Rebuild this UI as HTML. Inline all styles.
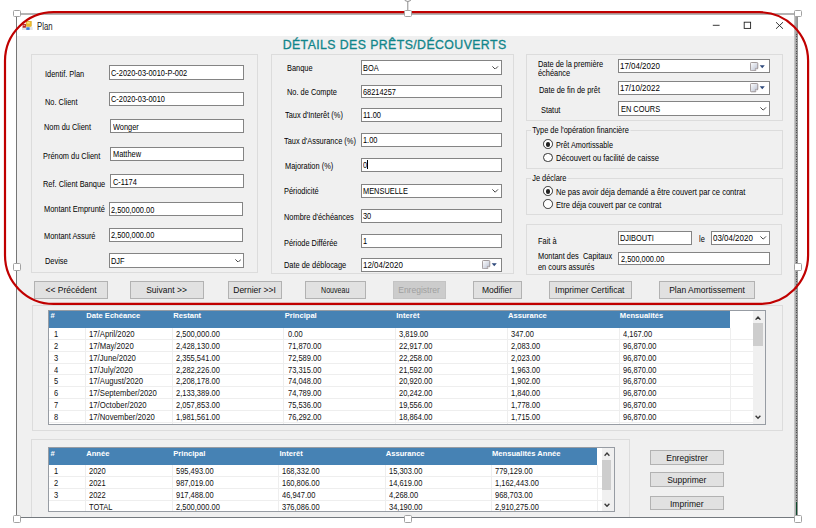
<!DOCTYPE html>
<html><head><meta charset="utf-8"><title>Plan</title>
<style>
html,body{margin:0;padding:0;background:#fff;}
body{width:816px;height:528px;position:relative;overflow:hidden;font-family:"Liberation Sans",sans-serif;color:#000;}
.a{position:absolute;box-sizing:border-box;}
.win{left:16.2px;top:13px;width:781.3px;height:505.2px;background:#f0f0f0;border-left:1px solid #767676;border-top:2px solid #b4b4b4;}
.tbar{left:17.2px;top:15px;width:777.3px;height:21.2px;background:#fff;}
.l{position:absolute;font-size:9.1px;line-height:10px;white-space:pre;transform-origin:0 50%;transform:scaleX(.815);color:#000;}
.tb{position:absolute;box-sizing:border-box;background:#fff;border:1px solid #848484;}
.tb span{position:absolute;left:1.4px;top:50%;margin-top:-4.7px;font-size:9.1px;line-height:10px;white-space:pre;transform-origin:0 50%;transform:scaleX(.815);color:#000;}
.gb{position:absolute;box-sizing:border-box;border:1px solid #dcdcdc;}
.btn{position:absolute;box-sizing:border-box;background:#e1e1e1;border:1px solid #b2b2b2;font-size:8.5px;line-height:16.9px;text-align:center;overflow:hidden;white-space:pre;color:#111;}
.bt{display:inline-block;font-size:9px;transform:scaleX(.945);}
.btn.dis{background:#cccccc;border-color:#c4c4c4;color:#a0a0a0;}
.h{position:absolute;box-sizing:border-box;width:7.4px;height:7.4px;background:#fff;border:1px solid #a2a2a2;border-radius:1.5px;}
.lv{position:absolute;box-sizing:border-box;background:#fff;border:1px solid #979ca3;overflow:hidden;}
.hd{position:absolute;left:0;top:0;background:#4682b4;}
.ht{position:absolute;font-size:7.6px;font-weight:bold;line-height:10px;color:#fff;white-space:pre;}
.c{position:absolute;font-size:9.1px;line-height:10px;white-space:pre;transform-origin:0 50%;transform:scaleX(.825);color:#111;}
.c.d{transform:scaleX(.85)}
.vl{position:absolute;width:1px;background:#eeeeee;}
.hl{position:absolute;height:1px;background:#eeeeee;}
.sb{position:absolute;background:#f0f0f0;}
.th{position:absolute;background:#cdcdcd;}
span.d,.tb span.d{transform:scaleX(.875);left:.7px}
.rad{position:absolute;box-sizing:border-box;width:9.6px;height:9.6px;border-radius:50%;border:.9px solid #333;background:#fff;}
.rad.on:after{content:"";position:absolute;left:1.6px;top:1.6px;width:4.6px;height:4.6px;border-radius:50%;background:#222;}
</style></head><body>

<div class="a win"></div><div class="a tbar"></div>
<div class="a" style="left:794.4px;top:13.5px;width:3.2px;height:504.5px;background:linear-gradient(90deg,#d2d2d2,#a4a4a4 45%,#8e8e8e);"></div>
<div class="a" style="left:795.9px;top:34px;width:1.3px;height:468px;background:repeating-linear-gradient(180deg,#3a3a3a 0,#3a3a3a 1px,rgba(0,0,0,0) 1px,rgba(0,0,0,0) 2.4px);opacity:.75"></div>
<div class="a" style="left:796.2px;top:502px;width:1.2px;height:14px;background:#0d4a2c;"></div>
<svg class="a" style="left:22.4px;top:20.6px" width="10.4" height="9.6" viewBox="0 0 10.4 9.6"><rect x=".2" y="6.4" width="10" height="2.9" fill="#e4e4e4" stroke="#d2d2d2" stroke-width=".3"/><rect x=".6" y="2.9" width="3.3" height="3.8" fill="#b82525"/><rect x="1.6" y="3.9" width="1.1" height="1.1" fill="#f4d0d0"/><rect x="4.3" y=".2" width="5.1" height="5.3" fill="#eebb28" stroke="#c89414" stroke-width=".4"/><rect x="5.2" y="1" width="2.6" height="1.6" fill="#fae489"/><rect x="4.3" y="6.3" width="3.3" height="2.6" fill="#3c7bdc"/></svg>
<div class="a" style="left:36.6px;top:21px;font-size:10.3px;line-height:11px;color:#222;transform-origin:0 50%;transform:scaleX(.755);">Plan</div>
<svg class="a" style="left:706px;top:18px" width="84" height="14" viewBox="0 0 84 14"><g stroke="#222" stroke-width=".9" fill="none"><path d="M6.8 7.3h6.8"/><rect x="38.2" y="4.2" width="6.4" height="6.2"/><path d="M70 4.2l7 6.6M77 4.2l-7 6.6"/></g></svg>
<div class="a" id="ttl" style="left:282.7px;top:37.6px;font-size:12.3px;line-height:14px;color:#10858a;white-space:pre;letter-spacing:.42px;-webkit-text-stroke:.3px #10858a;">DÉTAILS DES PRÊTS/DÉCOUVERTS</div>
<div class="gb" style="left:31px;top:54.3px;width:226.50px;height:219.20px;"></div>
<div class="l" style="left:44.5px;top:69.25px;">Identif. Plan</div>
<div class="tb" style="left:109px;top:65.4px;width:135.10px;height:14.30px;"><span>C-2020-03-0010-P-002</span></div>
<div class="l" style="left:44.5px;top:96.50px;">No. Client</div>
<div class="tb" style="left:109px;top:91.9px;width:135.10px;height:14.30px;"><span>C-2020-03-0010</span></div>
<div class="l" style="left:43.75px;top:122.00px;">Nom du Client</div>
<div class="tb" style="left:110.3px;top:119.2px;width:133.80px;height:14.30px;"><span>Wonger</span></div>
<div class="l" style="left:43.2px;top:150.50px;">Prénom du Client</div>
<div class="tb" style="left:110.3px;top:146.70000000000002px;width:133.80px;height:14.30px;"><span>Matthew</span></div>
<div class="l" style="left:42.9px;top:178.50px;">Ref. Client Banque</div>
<div class="tb" style="left:110.3px;top:174.20000000000002px;width:133.80px;height:14.30px;"><span>C-1174</span></div>
<div class="l" style="left:43.75px;top:204.25px;">Montant Emprunté</div>
<div class="tb" style="left:109px;top:202.20000000000002px;width:134.30px;height:14.30px;"><span>2,500,000.00</span></div>
<div class="l" style="left:43.75px;top:231.25px;">Montant Assuré</div>
<div class="tb" style="left:109px;top:227.9px;width:134.30px;height:14.30px;"><span>2,500,000.00</span></div>
<div class="l" style="left:45px;top:255.50px;">Devise</div>
<div class="tb" style="left:109px;top:253px;width:135.10px;height:14.50px;"><span>DJF</span><svg style="position:absolute;right:2px;top:50%;margin-top:-1.6px" width="6.4" height="3.8" viewBox="0 0 6.4 3.8"><path d="M.4 .4l2.8 2.8 2.8-2.8" stroke="#444" stroke-width="1" fill="none"/></svg></div>
<div class="gb" style="left:271px;top:54.3px;width:242.50px;height:220.00px;"></div>
<div class="l" style="left:286.5px;top:63.00px;">Banque</div>
<div class="tb" style="left:361px;top:60px;width:140.75px;height:14.50px;"><span>BOA</span><svg style="position:absolute;right:2px;top:50%;margin-top:-1.6px" width="6.4" height="3.8" viewBox="0 0 6.4 3.8"><path d="M.4 .4l2.8 2.8 2.8-2.8" stroke="#444" stroke-width="1" fill="none"/></svg></div>
<div class="l" style="left:287.25px;top:87.00px;">No. de Compte</div>
<div class="tb" style="left:361px;top:84.5px;width:140.75px;height:13.75px;"><span>68214257</span></div>
<div class="l" style="left:285.25px;top:109.90px;">Taux d'Interêt (%)</div>
<div class="tb" style="left:361px;top:108.25px;width:140.75px;height:13.50px;"><span>11.00</span></div>
<div class="l" style="left:284px;top:136.25px;">Taux d'Assurance (%)</div>
<div class="tb" style="left:361px;top:133.25px;width:140.75px;height:13.50px;"><span>1.00</span></div>
<div class="l" style="left:284.5px;top:161.00px;">Majoration (%)</div>
<div class="tb" style="left:361px;top:158px;width:140.75px;height:13.75px;"><span>0</span></div>
<div class="l" style="left:284px;top:186.00px;">Périodicité</div>
<div class="tb" style="left:361px;top:183.75px;width:140.75px;height:14.25px;"><span>MENSUELLE</span><svg style="position:absolute;right:2px;top:50%;margin-top:-1.6px" width="6.4" height="3.8" viewBox="0 0 6.4 3.8"><path d="M.4 .4l2.8 2.8 2.8-2.8" stroke="#444" stroke-width="1" fill="none"/></svg></div>
<div class="l" style="left:284px;top:211.75px;">Nombre d'échéances</div>
<div class="tb" style="left:361px;top:209.25px;width:140.75px;height:13.75px;"><span>30</span></div>
<div class="l" style="left:283.5px;top:238.00px;">Période Différée</div>
<div class="tb" style="left:361px;top:234.25px;width:140.75px;height:13.25px;"><span>1</span></div>
<div class="l" style="left:283.5px;top:260.00px;">Date de déblocage</div>
<div class="tb" style="left:361px;top:257.5px;width:140.75px;height:14.25px;"><span class="d">12/04/2020</span><svg style="position:absolute;right:3.6px;top:50%;margin-top:-4.6px" width="15" height="9.4" viewBox="0 0 15 9.4"><defs><linearGradient id="pg" x1="0" y1="0" x2="1" y2="1"><stop offset="0" stop-color="#fff"/><stop offset="1" stop-color="#b9bfd0"/></linearGradient></defs><path d="M1.4 .5h5.4q1 0 1 1v4.9l-2.4 2.4h-4q-1 0-1-1v-6.3q0-1 1-1z" fill="url(#pg)" stroke="#8a8080" stroke-width=".8"/><path d="M7.8 6.4h-2.4v2.4" fill="#fff" stroke="#8a8080" stroke-width=".6"/><path d="M9.7 3.2h5.1l-2.55 3z" fill="#2f4a7c"/></svg></div>
<div class="a" style="left:366.7px;top:160.3px;width:.8px;height:9px;background:#000"></div>
<div class="gb" style="left:525.5px;top:54.3px;width:257.00px;height:66.30px;"></div>
<div class="l" style="left:538px;top:59.25px;">Date de la première</div>
<div class="l" style="left:538px;top:68.25px;">échéance</div>
<div class="l" style="left:538.75px;top:84.50px;">Date de fin de prêt</div>
<div class="l" style="left:541.25px;top:105.00px;">Statut</div>
<div class="tb" style="left:618.25px;top:59.1px;width:151.25px;height:14.10px;"><span class="d">17/04/2020</span><svg style="position:absolute;right:3.6px;top:50%;margin-top:-4.6px" width="15" height="9.4" viewBox="0 0 15 9.4"><defs><linearGradient id="pg" x1="0" y1="0" x2="1" y2="1"><stop offset="0" stop-color="#fff"/><stop offset="1" stop-color="#b9bfd0"/></linearGradient></defs><path d="M1.4 .5h5.4q1 0 1 1v4.9l-2.4 2.4h-4q-1 0-1-1v-6.3q0-1 1-1z" fill="url(#pg)" stroke="#8a8080" stroke-width=".8"/><path d="M7.8 6.4h-2.4v2.4" fill="#fff" stroke="#8a8080" stroke-width=".6"/><path d="M9.7 3.2h5.1l-2.55 3z" fill="#2f4a7c"/></svg></div>
<div class="tb" style="left:618.25px;top:81.25px;width:151.25px;height:13.25px;"><span class="d">17/10/2022</span><svg style="position:absolute;right:3.6px;top:50%;margin-top:-4.6px" width="15" height="9.4" viewBox="0 0 15 9.4"><defs><linearGradient id="pg" x1="0" y1="0" x2="1" y2="1"><stop offset="0" stop-color="#fff"/><stop offset="1" stop-color="#b9bfd0"/></linearGradient></defs><path d="M1.4 .5h5.4q1 0 1 1v4.9l-2.4 2.4h-4q-1 0-1-1v-6.3q0-1 1-1z" fill="url(#pg)" stroke="#8a8080" stroke-width=".8"/><path d="M7.8 6.4h-2.4v2.4" fill="#fff" stroke="#8a8080" stroke-width=".6"/><path d="M9.7 3.2h5.1l-2.55 3z" fill="#2f4a7c"/></svg></div>
<div class="tb" style="left:618.25px;top:101.25px;width:151.25px;height:14.25px;"><span>EN COURS</span><svg style="position:absolute;right:2px;top:50%;margin-top:-1.6px" width="6.4" height="3.8" viewBox="0 0 6.4 3.8"><path d="M.4 .4l2.8 2.8 2.8-2.8" stroke="#444" stroke-width="1" fill="none"/></svg></div>
<div class="gb" style="left:526px;top:129.5px;width:256.75px;height:39.20px;"></div>
<div class="l" style="left:531px;top:124.50px;background:#f0f0f0;padding:0 1.5px;">Type de l'opération financière</div>
<div class="rad on" style="left:543.2px;top:139.45px"></div>
<div class="l" style="left:556px;top:140.00px;transform:scaleX(.80)">Prêt Amortissable</div>
<div class="rad" style="left:543.2px;top:152.7px"></div>
<div class="l" style="left:555.7px;top:153.25px;transform:scaleX(.835)">Découvert ou facilité de caisse</div>
<div class="gb" style="left:526px;top:177.5px;width:256.75px;height:37.50px;"></div>
<div class="l" style="left:530.5px;top:172.50px;background:#f0f0f0;padding:0 1.5px;">Je déclare</div>
<div class="rad on" style="left:543.2px;top:186.45px"></div>
<div class="l" style="left:555.9px;top:187.00px;transform:scaleX(.832)">Ne pas avoir déja demandé a être couvert par ce contrat</div>
<div class="rad" style="left:543.2px;top:199.45px"></div>
<div class="l" style="left:555.9px;top:200.00px;transform:scaleX(.83)">Etre déja couvert par ce contrat</div>
<div class="gb" style="left:526px;top:224px;width:256.20px;height:51.00px;"></div>
<div class="l" style="left:537.5px;top:235.50px;">Fait à</div>
<div class="tb" style="left:617.5px;top:231.25px;width:74.50px;height:13.25px;"><span>DJIBOUTI</span></div>
<div class="l" style="left:699px;top:234.00px;">le</div>
<div class="tb" style="left:711.25px;top:231.25px;width:58.25px;height:13.25px;"><span class="d">03/04/2020</span><svg style="position:absolute;right:2px;top:50%;margin-top:-1.6px" width="6.4" height="3.8" viewBox="0 0 6.4 3.8"><path d="M.4 .4l2.8 2.8 2.8-2.8" stroke="#444" stroke-width="1" fill="none"/></svg></div>
<div class="l" style="left:537.5px;top:250.50px;">Montant des  Capitaux</div>
<div class="l" style="left:537.5px;top:261.50px;">en cours assurés</div>
<div class="tb" style="left:618.25px;top:252.1px;width:151.25px;height:13.40px;"><span>2,500,000.00</span></div>
<div class="btn " style="left:34.25px;top:281px;width:73.50px;height:17.5px;"><span class="bt">&lt;&lt; Précédent</span></div>
<div class="btn " style="left:130px;top:281px;width:74.00px;height:17.5px;"><span class="bt">Suivant &gt;&gt;</span></div>
<div class="btn " style="left:228.25px;top:281px;width:53.25px;height:17.5px;"><span class="bt">Dernier &gt;&gt;I</span></div>
<div class="btn " style="left:305.25px;top:281px;width:60.50px;height:17.5px;"><span class="bt"><span style="display:inline-block;font-size:9.1px;transform:scaleX(.82)">Nouveau</span></span></div>
<div class="btn dis" style="left:393.25px;top:281px;width:52.25px;height:17.5px;"><span class="bt">Enregistrer</span></div>
<div class="btn " style="left:473px;top:281px;width:49.00px;height:17.5px;"><span class="bt">Modifier</span></div>
<div class="btn " style="left:548.5px;top:281px;width:83.50px;height:17.5px;"><span class="bt">Imprimer Certificat</span></div>
<div class="btn " style="left:658.5px;top:281px;width:96.50px;height:17.5px;"><span class="bt">Plan Amortissement</span></div>
<div class="gb" style="left:32px;top:304.5px;width:750.50px;height:126.50px;"></div>
<div class="lv" style="left:48px;top:310.4px;width:717.80px;height:114.20px;">
<div class="hd" style="width:681.00px;height:16.3px"></div>
<div class="ht" style="left:1.50px;top:0px">#</div>
<div class="ht" style="left:37.25px;top:0px">Date Echéance</div>
<div class="vl" style="left:36.00px;top:16.3px;height:114.20000000000005px"></div>
<div class="ht" style="left:124.25px;top:0px">Restant</div>
<div class="vl" style="left:123.00px;top:16.3px;height:114.20000000000005px"></div>
<div class="ht" style="left:235.65px;top:0px">Principal</div>
<div class="vl" style="left:234.40px;top:16.3px;height:114.20000000000005px"></div>
<div class="ht" style="left:347.25px;top:0px">Interêt</div>
<div class="vl" style="left:346.00px;top:16.3px;height:114.20000000000005px"></div>
<div class="ht" style="left:459.00px;top:0px">Assurance</div>
<div class="vl" style="left:457.75px;top:16.3px;height:114.20000000000005px"></div>
<div class="ht" style="left:570.85px;top:0px">Mensualités</div>
<div class="vl" style="left:569.60px;top:16.3px;height:114.20000000000005px"></div>
<div class="vl" style="left:681.00px;top:16.3px;height:114.20000000000005px"></div>
<div class="hl" style="left:0;top:27.52px;width:704.30px"></div>
<div class="c" style="left:4.60px;top:17.70px">1</div>
<div class="c d" style="left:40.10px;top:17.70px">17/April/2020</div>
<div class="c" style="left:127.10px;top:17.70px">2,500,000.00</div>
<div class="c" style="left:238.50px;top:17.70px">0.00</div>
<div class="c" style="left:350.10px;top:17.70px">3,819.00</div>
<div class="c" style="left:461.85px;top:17.70px">347.00</div>
<div class="c" style="left:573.70px;top:17.70px">4,167.00</div>
<div class="hl" style="left:0;top:39.36px;width:704.30px"></div>
<div class="c" style="left:4.60px;top:29.54px">2</div>
<div class="c d" style="left:40.10px;top:29.54px">17/May/2020</div>
<div class="c" style="left:127.10px;top:29.54px">2,428,130.00</div>
<div class="c" style="left:238.50px;top:29.54px">71,870.00</div>
<div class="c" style="left:350.10px;top:29.54px">22,917.00</div>
<div class="c" style="left:461.85px;top:29.54px">2,083.00</div>
<div class="c" style="left:573.70px;top:29.54px">96,870.00</div>
<div class="hl" style="left:0;top:51.20px;width:704.30px"></div>
<div class="c" style="left:4.60px;top:41.38px">3</div>
<div class="c d" style="left:40.10px;top:41.38px">17/June/2020</div>
<div class="c" style="left:127.10px;top:41.38px">2,355,541.00</div>
<div class="c" style="left:238.50px;top:41.38px">72,589.00</div>
<div class="c" style="left:350.10px;top:41.38px">22,258.00</div>
<div class="c" style="left:461.85px;top:41.38px">2,023.00</div>
<div class="c" style="left:573.70px;top:41.38px">96,870.00</div>
<div class="hl" style="left:0;top:63.04px;width:704.30px"></div>
<div class="c" style="left:4.60px;top:53.22px">4</div>
<div class="c d" style="left:40.10px;top:53.22px">17/July/2020</div>
<div class="c" style="left:127.10px;top:53.22px">2,282,226.00</div>
<div class="c" style="left:238.50px;top:53.22px">73,315.00</div>
<div class="c" style="left:350.10px;top:53.22px">21,592.00</div>
<div class="c" style="left:461.85px;top:53.22px">1,963.00</div>
<div class="c" style="left:573.70px;top:53.22px">96,870.00</div>
<div class="hl" style="left:0;top:74.88px;width:704.30px"></div>
<div class="c" style="left:4.60px;top:65.06px">5</div>
<div class="c d" style="left:40.10px;top:65.06px">17/August/2020</div>
<div class="c" style="left:127.10px;top:65.06px">2,208,178.00</div>
<div class="c" style="left:238.50px;top:65.06px">74,048.00</div>
<div class="c" style="left:350.10px;top:65.06px">20,920.00</div>
<div class="c" style="left:461.85px;top:65.06px">1,902.00</div>
<div class="c" style="left:573.70px;top:65.06px">96,870.00</div>
<div class="hl" style="left:0;top:86.72px;width:704.30px"></div>
<div class="c" style="left:4.60px;top:76.90px">6</div>
<div class="c d" style="left:40.10px;top:76.90px">17/September/2020</div>
<div class="c" style="left:127.10px;top:76.90px">2,133,389.00</div>
<div class="c" style="left:238.50px;top:76.90px">74,789.00</div>
<div class="c" style="left:350.10px;top:76.90px">20,242.00</div>
<div class="c" style="left:461.85px;top:76.90px">1,840.00</div>
<div class="c" style="left:573.70px;top:76.90px">96,870.00</div>
<div class="hl" style="left:0;top:98.56px;width:704.30px"></div>
<div class="c" style="left:4.60px;top:88.74px">7</div>
<div class="c d" style="left:40.10px;top:88.74px">17/October/2020</div>
<div class="c" style="left:127.10px;top:88.74px">2,057,853.00</div>
<div class="c" style="left:238.50px;top:88.74px">75,536.00</div>
<div class="c" style="left:350.10px;top:88.74px">19,556.00</div>
<div class="c" style="left:461.85px;top:88.74px">1,778.00</div>
<div class="c" style="left:573.70px;top:88.74px">96,870.00</div>
<div class="hl" style="left:0;top:110.40px;width:704.30px"></div>
<div class="c" style="left:4.60px;top:100.58px">8</div>
<div class="c d" style="left:40.10px;top:100.58px">17/November/2020</div>
<div class="c" style="left:127.10px;top:100.58px">1,981,561.00</div>
<div class="c" style="left:238.50px;top:100.58px">76,292.00</div>
<div class="c" style="left:350.10px;top:100.58px">18,864.00</div>
<div class="c" style="left:461.85px;top:100.58px">1,715.00</div>
<div class="c" style="left:573.70px;top:100.58px">96,870.00</div>
<div class="sb" style="left:704.30px;top:0;width:11.50px;height:114.20000000000005px"></div>
<div class="th" style="left:704.10px;top:11.7px;width:9.70px;height:22.5px"></div>
<svg style="position:absolute;left:706.15px;top:4.6px" width="6" height="4.4" viewBox="0 0 6 4.4"><path d="M.6 3.7l2.4-2.6 2.4 2.6" stroke="#3a3a3a" stroke-width="1.35" fill="none"/></svg><svg style="position:absolute;left:706.15px;top:103.80px" width="6" height="4.4" viewBox="0 0 6 4.4"><path d="M.6 .7l2.4 2.6 2.4-2.6" stroke="#3a3a3a" stroke-width="1.35" fill="none"/></svg>
</div>
<div class="gb" style="left:31px;top:438.5px;width:599.00px;height:91.50px;"></div>
<div class="lv" style="left:48px;top:446.8px;width:566.50px;height:65.40px;">
<div class="hd" style="width:547.60px;height:17.5px"></div>
<div class="ht" style="left:1.50px;top:1.3px">#</div>
<div class="ht" style="left:37.25px;top:1.3px">Année</div>
<div class="vl" style="left:36.00px;top:17.5px;height:65.40000000000003px"></div>
<div class="ht" style="left:124.25px;top:1.3px">Principal</div>
<div class="vl" style="left:123.00px;top:17.5px;height:65.40000000000003px"></div>
<div class="ht" style="left:230.50px;top:1.3px">Interêt</div>
<div class="vl" style="left:229.25px;top:17.5px;height:65.40000000000003px"></div>
<div class="ht" style="left:336.75px;top:1.3px">Assurance</div>
<div class="vl" style="left:335.50px;top:17.5px;height:65.40000000000003px"></div>
<div class="ht" style="left:443.00px;top:1.3px">Mensualités Année</div>
<div class="vl" style="left:441.75px;top:17.5px;height:65.40000000000003px"></div>
<div class="vl" style="left:547.60px;top:17.5px;height:65.40000000000003px"></div>
<div class="hl" style="left:0;top:28.02px;width:553.00px"></div>
<div class="c" style="left:4.60px;top:18.20px">1</div>
<div class="c" style="left:40.10px;top:18.20px">2020</div>
<div class="c" style="left:127.10px;top:18.20px">595,493.00</div>
<div class="c" style="left:233.35px;top:18.20px">168,332.00</div>
<div class="c" style="left:339.60px;top:18.20px">15,303.00</div>
<div class="c" style="left:445.85px;top:18.20px">779,129.00</div>
<div class="hl" style="left:0;top:39.88px;width:553.00px"></div>
<div class="c" style="left:4.60px;top:30.05px">2</div>
<div class="c" style="left:40.10px;top:30.05px">2021</div>
<div class="c" style="left:127.10px;top:30.05px">987,019.00</div>
<div class="c" style="left:233.35px;top:30.05px">160,806.00</div>
<div class="c" style="left:339.60px;top:30.05px">14,619.00</div>
<div class="c" style="left:445.85px;top:30.05px">1,162,443.00</div>
<div class="hl" style="left:0;top:51.72px;width:553.00px"></div>
<div class="c" style="left:4.60px;top:41.90px">3</div>
<div class="c" style="left:40.10px;top:41.90px">2022</div>
<div class="c" style="left:127.10px;top:41.90px">917,488.00</div>
<div class="c" style="left:233.35px;top:41.90px">46,947.00</div>
<div class="c" style="left:339.60px;top:41.90px">4,268.00</div>
<div class="c" style="left:445.85px;top:41.90px">968,703.00</div>
<div class="hl" style="left:0;top:63.57px;width:553.00px"></div>
<div class="c" style="left:40.10px;top:53.75px">TOTAL</div>
<div class="c" style="left:127.10px;top:53.75px">2,500,000.00</div>
<div class="c" style="left:233.35px;top:53.75px">376,086.00</div>
<div class="c" style="left:339.60px;top:53.75px">34,190.00</div>
<div class="c" style="left:445.85px;top:53.75px">2,910,275.00</div>
<div class="sb" style="left:553.00px;top:0;width:11.50px;height:65.40000000000003px"></div>
<div class="th" style="left:552.80px;top:12.5px;width:9.70px;height:29.5px"></div>
<svg style="position:absolute;left:554.85px;top:4.6px" width="6" height="4.4" viewBox="0 0 6 4.4"><path d="M.6 3.7l2.4-2.6 2.4 2.6" stroke="#3a3a3a" stroke-width="1.35" fill="none"/></svg><svg style="position:absolute;left:554.85px;top:55.00px" width="6" height="4.4" viewBox="0 0 6 4.4"><path d="M.6 .7l2.4 2.6 2.4-2.6" stroke="#3a3a3a" stroke-width="1.35" fill="none"/></svg>
</div>
<div class="btn" style="left:650.2px;top:450.1px;width:73.5px;height:14.6px;line-height:15.4px;"><span class="bt">Enregistrer</span></div>
<div class="btn" style="left:650.2px;top:472.4px;width:73.5px;height:14.6px;line-height:15.4px;"><span class="bt">Supprimer</span></div>
<div class="btn" style="left:650.2px;top:495.5px;width:73.5px;height:14.6px;line-height:15.4px;"><span class="bt">Imprimer</span></div>
<div class="a" style="left:0;top:518px;width:816px;height:10px;background:#fff"></div>
<div class="a" style="left:16.2px;top:516.6px;width:781.3px;height:1.7px;background:linear-gradient(#5e646a,#8a8e92)"></div>
<svg class="a" style="left:0;top:0" width="816" height="528" viewBox="0 0 816 528"><rect x="5" y="12.2" width="803.1" height="291.7" rx="48.6" ry="48.6" fill="none" stroke="#c00000" stroke-width="2.2"/><path d="M407.8 0v11" stroke="#8c8c8c" stroke-width="1"/><circle cx="407.8" cy="-2" r="3.5" fill="#fff" stroke="#8c8c8c"/></svg>
<div class="h" style="left:13.3px;top:10.1px"></div>
<div class="h" style="left:404.3px;top:10.1px"></div>
<div class="h" style="left:794.3px;top:10.1px"></div>
<div class="h" style="left:13.3px;top:263.3px"></div>
<div class="h" style="left:794.3px;top:263.3px"></div>
<div class="h" style="left:13.3px;top:515.3px"></div>
<div class="h" style="left:404.3px;top:515.3px"></div>
<div class="h" style="left:794.3px;top:515.3px"></div>
</body></html>
